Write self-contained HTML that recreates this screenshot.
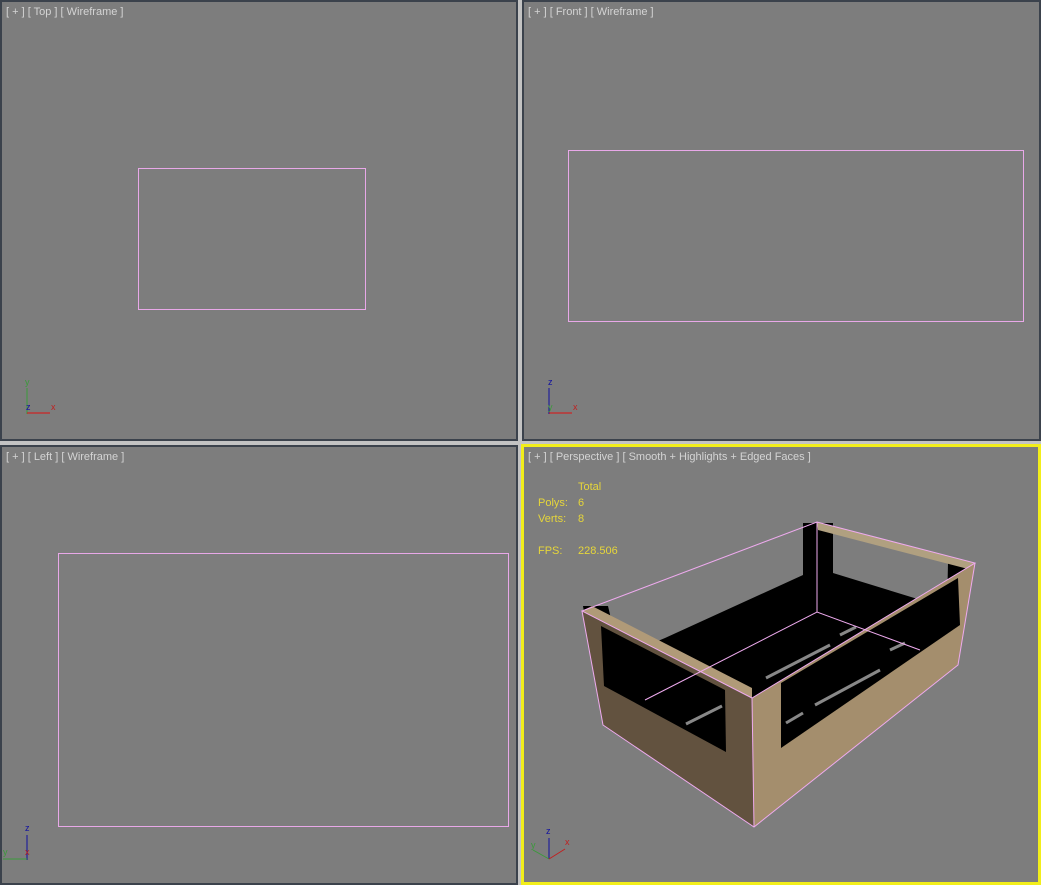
<!DOCTYPE html>
<html><head><meta charset="utf-8"><style>
body{margin:0;width:1041px;height:885px;background:#c3c3c3;position:relative;overflow:hidden;font-family:"Liberation Sans",sans-serif;}
.vp{position:absolute;background:#7d7d7d;box-sizing:border-box;border:2px solid #3b424c;}
.lbl{position:absolute;left:4px;top:4px;font-size:11px;color:#d4d4d4;white-space:pre;}
.st{position:absolute;font-size:11px;color:#e6d63a;white-space:pre;}
svg{position:absolute;left:0;top:0;}
</style></head><body>
<div class="vp" style="left:0;top:0;width:518px;height:441px"><div class="lbl">[ + ] [ Top ] [ Wireframe ]</div></div>
<div class="vp" style="left:522px;top:0;width:519px;height:441px"><div class="lbl">[ + ] [ Front ] [ Wireframe ]</div></div>
<div class="vp" style="left:0;top:445px;width:518px;height:440px"><div class="lbl">[ + ] [ Left ] [ Wireframe ]</div></div>
<div class="vp" style="left:521px;top:444px;width:520px;height:441px;border:3px solid #f2ee1a"><div class="lbl" style="left:4px;top:4px">[ + ] [ Perspective ] [ Smooth + Highlights + Edged Faces ]</div></div>
<div class="st" style="left:578px;top:481px">Total</div>
<div class="st" style="left:538px;top:497px">Polys:</div><div class="st" style="left:578px;top:497px">6</div>
<div class="st" style="left:538px;top:513px">Verts:</div><div class="st" style="left:578px;top:513px">8</div>
<div class="st" style="left:538px;top:545px">FPS:</div><div class="st" style="left:578px;top:545px">228.506</div>
<svg width="1041" height="885" font-family="Liberation Sans" font-size="9">
<g fill="none" stroke="#e8a8e8" stroke-width="1">
<rect x="138.5" y="168.5" width="227" height="141"/>
<rect x="568.5" y="150.5" width="455" height="171"/>
<rect x="58.5" y="553.5" width="450" height="273"/>
</g>
<line x1="27" y1="388" x2="27" y2="414" stroke="#3a9a3a"/><line x1="27" y1="413" x2="50" y2="413" stroke="#e01010"/>
<text x="25" y="385" fill="#3a9a3a">y</text><text x="26" y="410" fill="#1010a0">z</text><text x="51" y="410" fill="#c02020">x</text>
<line x1="549" y1="388" x2="549" y2="414" stroke="#1010a0"/><line x1="549" y1="413" x2="572" y2="413" stroke="#e01010"/>
<text x="548" y="385" fill="#1010a0">z</text><text x="548" y="410" fill="#3a9a3a">y</text><text x="573" y="410" fill="#c02020">x</text>
<line x1="27" y1="835" x2="27" y2="860" stroke="#1010a0"/><line x1="3" y1="859" x2="27" y2="859" stroke="#3a9a3a"/>
<text x="25" y="831" fill="#1010a0">z</text><text x="3" y="855" fill="#3a9a3a">y</text><text x="25" y="855" fill="#c02020">x</text>
<line x1="549" y1="838" x2="549" y2="859" stroke="#1010a0"/><line x1="549" y1="859" x2="533" y2="850" stroke="#3a9a3a"/><line x1="549" y1="859" x2="565" y2="849" stroke="#c02020"/>
<text x="546" y="834" fill="#1010a0">z</text><text x="531" y="848" fill="#3a9a3a">y</text><text x="565" y="845" fill="#c02020">x</text>
<polygon fill="#000" points="583,606 608,606 620,657 665,638 803,575 803,523 833,523 833,573 947,608 948,563 975,563 958,665 754,827 603,725"/>
<polygon fill="#b0a080" points="817,522 975,563 972,570 818,530"/>
<polygon fill="#62523f" points="582,611 752,698 754,827 603,725"/>
<polygon fill="#000" points="601,626 725,690 726,752 604,686"/>
<polygon fill="#b09a78" points="582,611 752,698 752,688 592,606"/>
<polygon fill="#a48e6d" points="752,698 975,563 958,665 754,827"/>
<polygon fill="#000" points="781,683 958,578 960,625 781,748"/>
<g stroke="#888" stroke-width="3"><line x1="766" y1="678" x2="830" y2="645"/><line x1="815" y1="705" x2="880" y2="670"/><line x1="786" y1="723" x2="803" y2="713"/><line x1="840" y1="635" x2="856" y2="627"/><line x1="890" y1="650" x2="905" y2="643"/><line x1="686" y1="724" x2="722" y2="706"/></g>
<g fill="none" stroke="#eeaaee" stroke-width="1">
<polygon points="582,611 817,522 975,563 752,698"/>
<polyline points="582,611 603,725 754,827 958,665 975,563"/>
<line x1="752" y1="698" x2="754" y2="827"/>
<line x1="817" y1="522" x2="817" y2="612"/>
<polyline points="645,700 817,612 920,650"/>
</g>
</svg>
</body></html>
